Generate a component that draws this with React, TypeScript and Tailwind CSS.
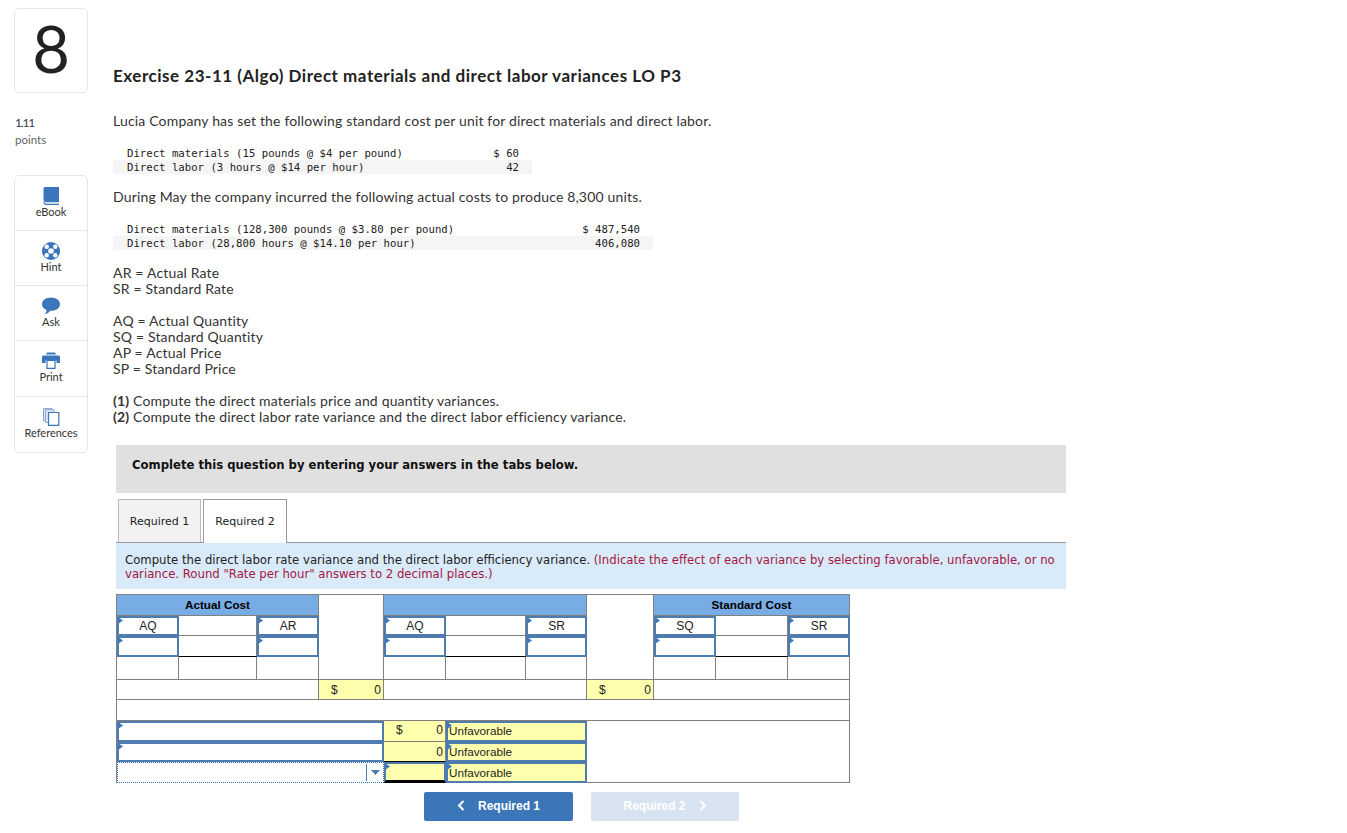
import React from "react";

const mono = "font-['DejaVu_Sans_Mono',monospace] text-[10.67px] leading-[16px] text-[#222]";
const line = "border-r border-b border-[#808080]";
const inputB = "border-2 border-[#4f7cae]";

function Tri() {
  return (
    <svg className="absolute left-[-1px] top-[-1px]" width="5" height="7" viewBox="0 0 5 7">
      <path d="M0 0 L5 3.5 L0 7 Z" fill="#3f78bd" />
    </svg>
  );
}

function Plain({ className = "" }: { className?: string }) {
  return <div className={`${line} ${className}`} />;
}

function Head({ children }: { children?: React.ReactNode }) {
  return (
    <div className={`${line} col-span-3 bg-[#78ace5] flex items-center justify-center font-bold text-[11.7px] text-black`}>
      {children}
    </div>
  );
}

function Input({ children, className = "", left = false }: { children?: React.ReactNode; className?: string; left?: boolean }) {
  return (
    <div className={`relative ${inputB} flex items-center ${left ? "justify-start pl-[1px] text-[11.7px]" : "justify-center"} ${className}`}>
      <Tri />
      {children}
    </div>
  );
}

function Money({ className = "" }: { className?: string }) {
  return (
    <div className={`${line} bg-[#ffffad] flex items-center justify-between pr-[2px] pl-[12px] ${className}`}>
      <span>$</span>
      <span>0</span>
    </div>
  );
}

function Sheet() {
  return (
    <div className="ml-[3px] mt-[5px] grid w-[734px] grid-cols-[62px_78px_62px_65px_62px_80px_61px_67px_62px_72px_62px] grid-rows-[21px_20px_21px_23px_20px_21px_21px_20px_21px] border-t border-l border-[#808080] font-['Liberation_Sans',Arial,sans-serif] text-[12px] leading-[14px] text-[#222]">
      <Head>Actual Cost</Head>
      <Plain className="row-span-4" />
      <Head />
      <Plain className="row-span-4" />
      <Head>Standard Cost</Head>

      <Input>AQ</Input>
      <Plain />
      <Input>AR</Input>
      <Input>AQ</Input>
      <Plain />
      <Input>SR</Input>
      <Input>SQ</Input>
      <Plain />
      <Input>SR</Input>

      <Input />
      <div className="border-r border-b border-r-[#808080] border-b-black" />
      <Input />
      <Input />
      <div className="border-r border-b border-r-[#808080] border-b-black" />
      <Input />
      <Input />
      <div className="border-r border-b border-r-[#808080] border-b-black" />
      <Input />

      {Array.from({ length: 9 }).map((_, i) => (
        <Plain key={i} />
      ))}

      <Plain className="col-span-3" />
      <Money />
      <Plain className="col-span-3" />
      <Money />
      <Plain className="col-span-3" />

      <Plain className="col-span-11" />

      <Input className="col-span-4" />
      <Money className="pb-[2px]" />
      <Input left className="col-span-2 bg-[#ffffad] pb-[2px]">Unfavorable</Input>
      <Plain className="col-span-4 row-span-3" />

      <Input className="col-span-4" />
      <div className="border-r border-b border-r-[#808080] border-b-black bg-[#ffffad] flex items-center justify-end pr-[2px]">0</div>
      <Input left className="col-span-2 bg-[#ffffad]">Unfavorable</Input>

      <div className="col-span-4 relative border border-dotted border-[#2f6fb5] flex justify-end">
        <div className="my-px w-[17px] border-l border-[#4f7cae] flex items-center justify-center">
          <svg width="9" height="5" viewBox="0 0 9 5"><path d="M0 0 H9 L4.5 5 Z" fill="#4f7cae" /></svg>
        </div>
      </div>
      <div className="relative border-2 border-[#4f7cae] border-b-[3px] border-b-black bg-[#ffffad]"><Tri /></div>
      <Input left className="col-span-2 bg-[#ffffad]">Unfavorable</Input>
    </div>
  );
}

function SideItem({ label, icon, h, last = false }: { label: string; icon: React.ReactNode; h: string; last?: boolean }) {
  return (
    <div className={`${h} flex flex-col items-center pt-[10px] ${last ? "" : "border-b border-[#e6e6e6]"}`}>
      <div className="h-[19px] flex items-center justify-center">{icon}</div>
      <div className="text-[11px] leading-[13px] text-[#333]">{label}</div>
    </div>
  );
}

const B = "#3b76bd";

const icons = {
  book: (
    <svg width="17" height="18" viewBox="0 0 17 18">
      <path d="M2 0 H16 V15 H3 Q0.5 15 0.5 13 V2 Q0.5 0 2 0 Z" fill={B} />
      <path d="M1 14.5 Q1 17.3 3 17.3 H16" fill="none" stroke={B} strokeWidth="1.2" />
      <path d="M3 15.8 H16" stroke="#b9cde6" strokeWidth="1" />
    </svg>
  ),
  hint: (
    <svg width="18" height="18" viewBox="0 0 18 18">
      <circle cx="9" cy="9" r="9" fill={B} />
      <circle cx="9" cy="9" r="2.8" fill="#fff" />
      <circle cx="4.7" cy="4.7" r="2.2" fill="#fff" />
      <circle cx="13.3" cy="4.7" r="2.2" fill="#fff" />
      <circle cx="4.7" cy="13.3" r="2.2" fill="#fff" />
      <circle cx="13.3" cy="13.3" r="2.2" fill="#fff" />
    </svg>
  ),
  ask: (
    <svg width="18" height="18" viewBox="0 0 18 18">
      <path d="M9 0.5 C14 0.5 18 3.3 18 7.2 C18 11 14 13.8 9 13.8 L8 13.8 C7 15.5 5 17 3 17 C4 15.8 4.6 14.3 4.6 13 C1.8 11.8 0 9.7 0 7.2 C0 3.3 4 0.5 9 0.5 Z" fill={B} />
    </svg>
  ),
  print: (
    <svg width="18" height="17" viewBox="0 0 18 17">
      <path d="M5 0.5 H13 L14 2.5 H4 Z" fill={B} />
      <path d="M1.5 3.5 H16.5 Q18 3.5 18 5 V11 H14.5 V8.5 H3.5 V11 H0 V5 Q0 3.5 1.5 3.5 Z" fill={B} />
      <path d="M5 8.5 H13 V16.3 H5 Z" fill="#fff" stroke={B} strokeWidth="1.2" />
    </svg>
  ),
  refs: (
    <svg width="17" height="18" viewBox="0 0 17 18">
      <path d="M0.5 0.5 H9 V13 H0.5 Z" fill="#dfe7f2" stroke="#8aa9d2" />
      <path d="M2.5 1.8 H11 V14.5 H2.5 Z" fill="#dfe7f2" stroke="#8aa9d2" />
      <path d="M5.5 4.5 H15.8 V17.3 H5.5 Z" fill="#fff" stroke={B} strokeWidth="1.2" />
    </svg>
  ),
};

function Mono({ rows, width }: { rows: [string, string][]; width: number }) {
  return (
    <div className={mono} style={{ width }}>
      {rows.map(([a, b], i) => (
        <div key={i} className={`flex justify-between pl-[14px] pr-[13px] h-[14px] whitespace-pre ${i === 1 ? "bg-[#f5f5f5]" : ""}`}>
          <span>{a}</span>
          <span>{b}</span>
        </div>
      ))}
    </div>
  );
}

export default function App() {
  return (
    <div className="flex h-[833px] w-[1347px] overflow-hidden bg-white font-['Lato','Open_Sans',sans-serif] text-[#333]">
      <aside className="ml-[14px] mt-[8px] w-[74px] shrink-0">
        <div className="h-[85px] rounded-[5px] border border-[#e6e6e6] flex items-center justify-center pb-[4px] text-[65px] font-normal leading-none text-[#222]">
          8
        </div>
        <div className="mt-[22px] text-[12px] leading-[16px] tracking-[-1.2px] text-[#2e3b52] pl-px">1.11</div>
        <div className="text-[11.5px] leading-[16px] text-[#666] mt-[1px] pl-px">points</div>
        <div className="mt-[27px] rounded-[5px] border border-[#e6e6e6]">
          <SideItem h="h-[55px]" label="eBook" icon={icons.book} />
          <SideItem h="h-[55px]" label="Hint" icon={icons.hint} />
          <SideItem h="h-[55px]" label="Ask" icon={icons.ask} />
          <SideItem h="h-[56px]" label="Print" icon={icons.print} />
          <SideItem h="h-[55px]" label="References" icon={icons.refs} last />
        </div>
      </aside>

      <main className="ml-[25px] w-[953px] pt-[66px] text-[14px] leading-[16px] tracking-[0.17px]">
        <h1 className="h-[20px] text-[17px] font-bold leading-[20px] tracking-[0.52px] text-[#222]">
          Exercise 23-11 (Algo) Direct materials and direct labor variances LO P3
        </h1>
        <p className="mt-[27px]">Lucia Company has set the following standard cost per unit for direct materials and direct labor.</p>
        <div className="mt-[17px] tracking-normal">
          <Mono width={419} rows={[["Direct materials (15 pounds @ $4 per pound)", "$ 60"], ["Direct labor (3 hours @ $14 per hour)", "42"]]} />
        </div>
        <p className="mt-[15px]">During May the company incurred the following actual costs to produce 8,300 units.</p>
        <div className="mt-[17px] tracking-normal">
          <Mono width={540} rows={[["Direct materials (128,300 pounds @ $3.80 per pound)", "$ 487,540"], ["Direct labor (28,800 hours @ $14.10 per hour)", "406,080"]]} />
        </div>
        <p className="mt-[15px]">AR = Actual Rate<br />SR = Standard Rate</p>
        <p className="mt-[16px]">AQ = Actual Quantity<br />SQ = Standard Quantity<br />AP = Actual Price<br />SP = Standard Price</p>
        <p className="mt-[16px]"><b>(1)</b> Compute the direct materials price and quantity variances.<br /><b>(2)</b> Compute the direct labor rate variance and the direct labor efficiency variance.</p>

        <div className="ml-[3px] mt-[20px] h-[48px] w-[950px] bg-[#e0e0e0] pl-[16px] pb-[9px] flex items-center font-['DejaVu_Sans',Verdana,sans-serif] text-[11.65px] font-bold tracking-normal text-[#111]">
          Complete this question by entering your answers in the tabs below.
        </div>

        <div className="ml-[3px] mt-[6px] w-[950px] h-[44px] border-b border-[#999] flex items-end gap-[2px] pl-[2px] font-['DejaVu_Sans',Verdana,sans-serif] text-[11px] tracking-normal text-[#222]">
          <div className="h-[43px] w-[83px] border border-b-0 border-[#bbbbbb] bg-[#f2f2f2] flex items-center justify-center pt-[1px]">Required 1</div>
          <div className="h-[44px] w-[84px] border border-b-0 border-[#999] bg-white flex items-center justify-center -mb-px">Required 2</div>
        </div>
        <div className="ml-[3px] w-[950px] h-[46px] bg-[#d9eafa] px-[9px] pt-[10px] font-['DejaVu_Sans',Verdana,sans-serif] text-[11.7px] leading-[14px] tracking-normal text-[#222] whitespace-nowrap">
          <div>Compute the direct labor rate variance and the direct labor efficiency variance. <span className="text-[#a5173f]">(Indicate the effect of each variance by selecting favorable, unfavorable, or no</span></div>
          <div className="text-[#a5173f]">variance. Round "Rate per hour" answers to 2 decimal places.)</div>
        </div>

        <div className="tracking-normal">
          <Sheet />
        </div>

        <div className="mt-[9px] ml-[311px] flex gap-[18px] font-['Liberation_Sans',Arial,sans-serif] text-[12px] font-bold tracking-normal text-white">
          <button className="h-[29px] w-[149px] rounded-[2px] bg-[#3b76b9] flex items-center justify-center gap-[13px] pb-[2px]">
            <svg width="8" height="11" viewBox="0 0 8 11"><path d="M6.5 1 L2 5.5 L6.5 10" fill="none" stroke="#fff" strokeWidth="2" /></svg>
            Required 1
          </button>
          <button className="h-[29px] w-[148px] rounded-[2px] bg-[#d8e3f1] flex items-center justify-center gap-[13px] pb-[2px]">
            Required 2
            <svg width="8" height="11" viewBox="0 0 8 11"><path d="M1.5 1 L6 5.5 L1.5 10" fill="none" stroke="#fff" strokeWidth="2" /></svg>
          </button>
        </div>
      </main>
    </div>
  );
}
